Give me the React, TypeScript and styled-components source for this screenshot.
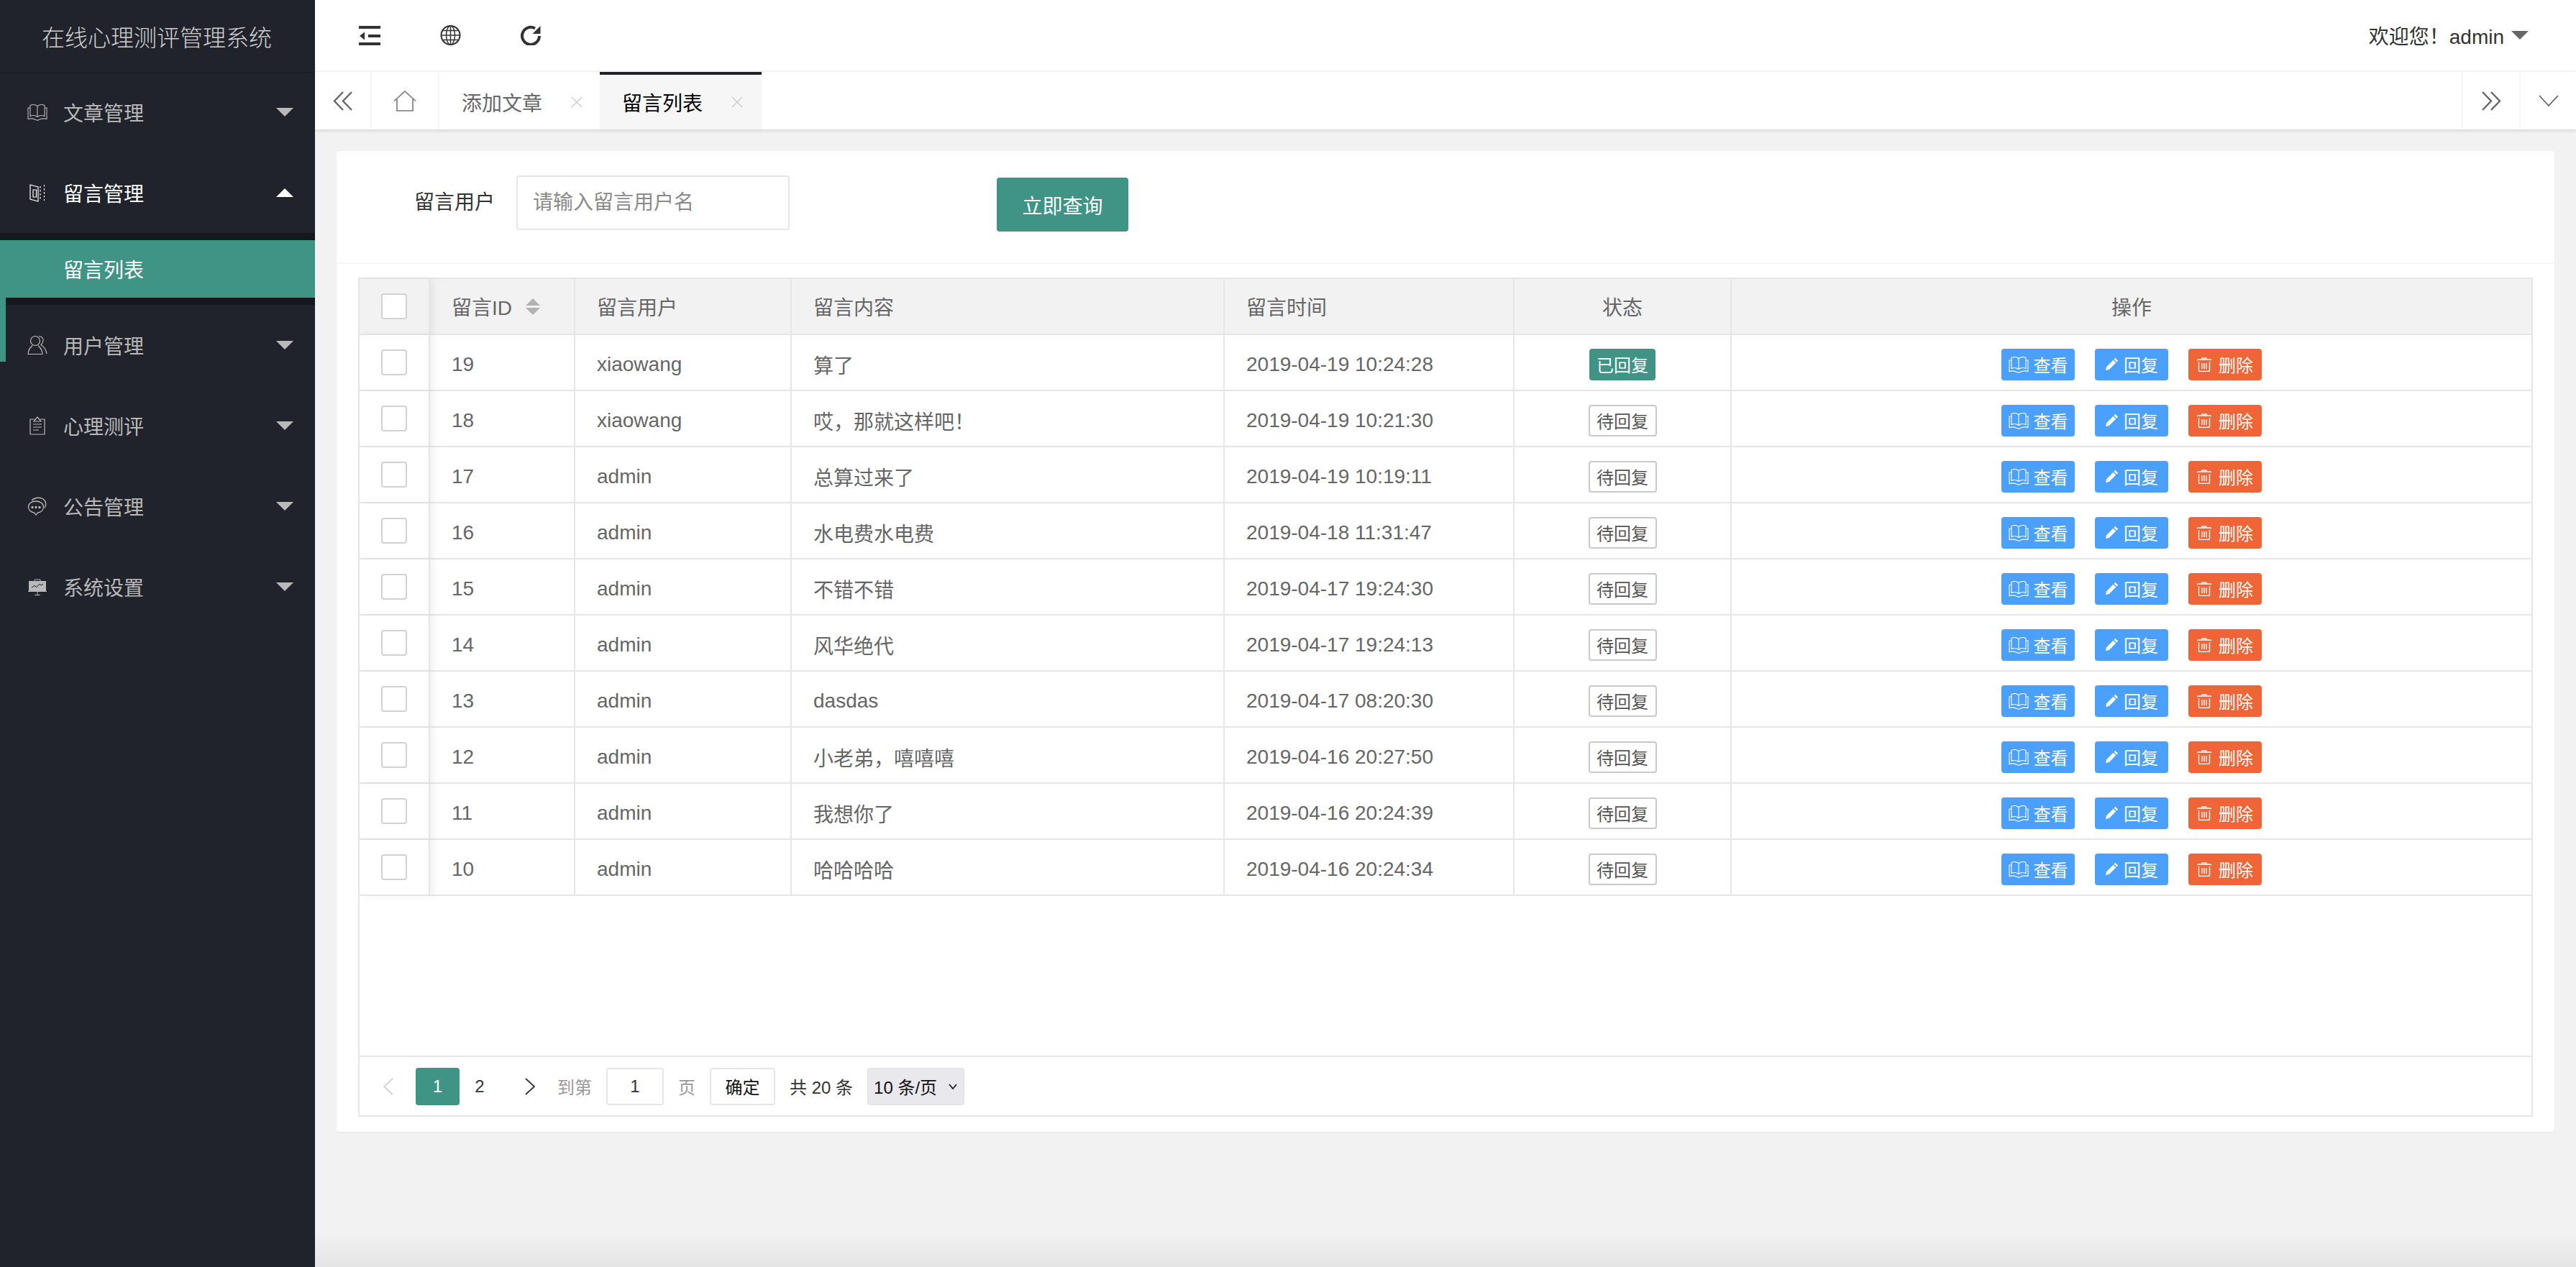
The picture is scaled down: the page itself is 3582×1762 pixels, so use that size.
import styled, { createGlobalStyle } from "styled-components";

const teal = "#409485";

const GlobalStyle = createGlobalStyle`
  html, body {
    margin: 0;
    padding: 0;
    background: #f2f2f2;
    font-family: "Liberation Sans", "Noto Sans CJK SC", sans-serif;
    font-size: 28px;
    color: #666;
  }
  * {
    box-sizing: border-box;
  }
`;

const Page = styled.div`
  display: flex;
  min-height: 100vh;
`;

const Sidebar = styled.aside`
  flex: none;
  width: 438px;
  background: #20232b;
`;

const Logo = styled.div`
  height: 100px;
  display: flex;
  align-items: center;
  padding-left: 58px;
  font-size: 32px;
  font-weight: 300;
  color: #d0d0d0;
  box-shadow: 0 1px 2px rgba(0, 0, 0, 0.2);
`;

const NavItem = styled.div<{ $active?: boolean }>`
  height: 112px;
  display: flex;
  align-items: center;
  padding: 0 30px 0 38px;
  color: ${({ $active }) => ($active ? "#fff" : "#b9b9b9")};
`;

const NavIcon = styled.span`
  flex: none;
  width: 28px;
  height: 28px;
  margin-right: 22px;
  display: flex;
  align-items: center;
  justify-content: center;
`;

const NavLabel = styled.span`
  flex: 1;
`;

const Caret = styled.span<{ $up?: boolean }>`
  width: 0;
  height: 0;
  border-left: 12px solid transparent;
  border-right: 12px solid transparent;
  border-top: ${({ $up }) => ($up ? "0" : "12px solid currentColor")};
  border-bottom: ${({ $up }) => ($up ? "12px solid currentColor" : "0")};
`;

const SubMenu = styled.div`
  position: relative;
  padding: 10px 0;
  background: #16181e;
`;

const SubItem = styled.div`
  height: 80px;
  display: flex;
  align-items: center;
  padding-left: 88px;
  background: ${teal};
  color: #fff;
`;

const NavMarker = styled.span`
  position: absolute;
  left: 0;
  top: 90px;
  width: 8px;
  height: 89px;
  background: ${teal};
`;

const Main = styled.main`
  flex: 1;
  min-width: 0;
  background: linear-gradient(to bottom, #f2f2f2 calc(100% - 50px), #e5e5e5 100%);
`;

const Header = styled.header`
  height: 100px;
  display: flex;
  align-items: center;
  padding: 0 66px 0 61px;
  background: #fff;
  border-bottom: 2px solid #f6f6f6;
  color: #333;
`;

const HeaderTools = styled.div`
  display: flex;
  align-items: center;
  gap: 83px;
`;

const Welcome = styled.div`
  margin-left: auto;
  display: flex;
  align-items: center;
  gap: 10px;
  color: #333;
`;

const WelcomeCaret = styled(Caret)`
  color: #666;
`;

const TabBar = styled.nav`
  position: relative;
  height: 80px;
  display: flex;
  background: #fff;
  box-shadow: 0 2px 5px rgba(0, 0, 0, 0.12);
  color: #666;
`;

const TabButton = styled.div<{ $width: number; $side?: "left" | "right" }>`
  flex: none;
  width: ${({ $width }) => $width}px;
  display: flex;
  align-items: center;
  justify-content: center;
  ${({ $side }) =>
    $side === "left"
      ? "border-left: 2px solid #f6f6f6;"
      : "border-right: 2px solid #f6f6f6;"}
`;

const TabSpacer = styled.div`
  flex: 1;
`;

const Tab = styled.div<{ $active?: boolean }>`
  flex: none;
  width: ${({ $active }) => ($active ? 225 : 223)}px;
  display: flex;
  align-items: center;
  padding-left: 31px;
  color: ${({ $active }) => ($active ? "#000" : "#666")};
  background: ${({ $active }) => ($active ? "#f6f6f6" : "#fff")};
  border-top: 4px solid ${({ $active }) => ($active ? "#20232b" : "transparent")};
`;

const TabClose = styled.span`
  margin-left: 40px;
  display: flex;
  color: #c9c9c9;
`;

const Content = styled.section`
  padding: 30px;
`;

const Panel = styled.div`
  height: 1364px;
  background: #fff;
  border-radius: 4px;
  box-shadow: 0 1px 2px rgba(0, 0, 0, 0.05);
  display: flex;
  flex-direction: column;
`;

const SearchBar = styled.form`
  height: 157px;
  flex: none;
  display: flex;
  align-items: flex-start;
  padding: 34px 0 0 108px;
  border-bottom: 2px solid #f6f6f6;
`;

const SearchLabel = styled.label`
  width: 142px;
  line-height: 76px;
  color: #333;
`;

const SearchInput = styled.input`
  width: 380px;
  height: 76px;
  padding: 0 21px;
  border: 2px solid #e6e6e6;
  border-radius: 4px;
  font: inherit;
  color: #333;
  outline: none;

  &::placeholder {
    color: #8a8a8a;
  }
`;

const SearchButton = styled.button`
  width: 183px;
  height: 75px;
  margin: 3px 0 0 288px;
  border: 0;
  border-radius: 4px;
  background: ${teal};
  color: #fff;
  font: inherit;
`;

const TableBox = styled.div`
  flex: none;
  height: 1167px;
  margin: 19px 30px 21px 30px;
  border: 2px solid #e6e6e6;
  display: flex;
  flex-direction: column;
`;

const Table = styled.table`
  width: 100%;
  table-layout: fixed;
  border-collapse: separate;
  border-spacing: 0;
`;

const Th = styled.th<{ $width?: number; $center?: boolean }>`
  ${({ $width }) => ($width ? `width: ${$width}px;` : "")}
  height: 78px;
  padding: 0 ${({ $center }) => ($center ? 0 : 30)}px;
  background: #f2f2f2;
  border-right: 2px solid #e6e6e6;
  border-bottom: 2px solid #e6e6e6;
  font-weight: 400;
  text-align: ${({ $center }) => ($center ? "center" : "left")};
  color: #666;

  &:last-child {
    border-right: 0;
  }
`;

const Td = styled.td<{ $center?: boolean }>`
  height: 78px;
  padding: 5px ${({ $center }) => ($center ? 0 : 30)}px 0;
  border-right: 2px solid #e6e6e6;
  border-bottom: 2px solid #e6e6e6;
  text-align: ${({ $center }) => ($center ? "center" : "left")};
  color: #666;

  &:last-child {
    border-right: 0;
  }
`;

const FixedTh = styled(Th)`
  position: relative;
  box-shadow: 5px 0 10px rgba(0, 0, 0, 0.06);
`;

const FixedTd = styled(Td)`
  position: relative;
  padding-top: 0;
  background: #fff;
  box-shadow: 5px 0 10px rgba(0, 0, 0, 0.06);
`;

const Check = styled.span`
  display: block;
  width: 36px;
  height: 36px;
  margin: 0 auto;
  background: #fff;
  border: 2px solid #d2d2d2;
  border-radius: 4px;
`;

const SortHead = styled.span`
  display: flex;
  align-items: center;
  gap: 19px;
`;

const SortIcon = styled.span`
  display: flex;
  flex-direction: column;
  gap: 3px;
`;

const SortArrow = styled.span<{ $up?: boolean }>`
  width: 0;
  height: 0;
  border-left: 10px solid transparent;
  border-right: 10px solid transparent;
  border-top: ${({ $up }) => ($up ? "0" : "10px solid #b2b2b2")};
  border-bottom: ${({ $up }) => ($up ? "10px solid #b2b2b2" : "0")};
`;

const StatusTag = styled.span<{ $done?: boolean }>`
  display: inline-flex;
  align-items: center;
  justify-content: center;
  vertical-align: middle;
  width: ${({ $done }) => ($done ? 92 : 95)}px;
  height: 44px;
  font-size: 24px;
  border-radius: 4px;
  color: ${({ $done }) => ($done ? "#fff" : "#555")};
  background: ${({ $done }) => ($done ? teal : "#fff")};
  border: ${({ $done }) => ($done ? "0" : "2px solid #c9c9c9")};
`;

const Actions = styled.div`
  display: flex;
  justify-content: center;
  gap: 28px;
`;

const ActionButton = styled.span<{ $danger?: boolean }>`
  width: 102px;
  height: 44px;
  display: flex;
  align-items: center;
  justify-content: center;
  gap: ${({ $danger }) => ($danger ? 10 : 7)}px;
  border-radius: 4px;
  font-size: 24px;
  color: #fff;
  background: ${({ $danger }) => ($danger ? "#f06537" : "#4ba0fb")};
`;

const TableFill = styled.div`
  flex: 1;
`;

const Pager = styled.div`
  flex: none;
  height: 83px;
  display: flex;
  align-items: center;
  gap: 20px;
  padding-left: 32px;
  border-top: 2px solid #e6e6e6;
  font-size: 24px;
  color: #333;
`;

const PagerChevron = styled.span<{ $off?: boolean; $gap: number }>`
  display: flex;
  margin-left: ${({ $gap }) => $gap}px;
  color: ${({ $off }) => ($off ? "#d2d2d2" : "#333")};
`;

const PageNumber = styled.span<{ $current?: boolean }>`
  height: 52px;
  display: flex;
  align-items: center;
  justify-content: center;
  border-radius: 4px;
  width: ${({ $current }) => ($current ? 61 : 56)}px;
  margin-left: ${({ $current }) => ($current ? 11 : -20)}px;
  background: ${({ $current }) => ($current ? teal : "transparent")};
  color: ${({ $current }) => ($current ? "#fff" : "#333")};
`;

const PagerHint = styled.span<{ $gap?: number }>`
  color: #999;
  margin-left: ${({ $gap }) => $gap ?? 0}px;
`;

const PagerInput = styled.input`
  width: 80px;
  height: 52px;
  text-align: center;
  border: 2px solid #e6e6e6;
  border-radius: 4px;
  font: inherit;
  color: #333;
  outline: none;
`;

const PagerConfirm = styled.button`
  width: 91px;
  height: 52px;
  padding: 0;
  background: #fff;
  border: 2px solid #e6e6e6;
  border-radius: 4px;
  font: inherit;
  color: #111;
`;

const PageSize = styled.div`
  width: 135px;
  height: 52px;
  display: flex;
  align-items: center;
  gap: 16px;
  padding-left: 8px;
  background: #e9e9ed;
  border: 1px solid #dedee2;
  border-radius: 4px;
  color: #111;
  white-space: nowrap;
`;

const BookIcon = ({ size = 28 }: { size?: number }) => (
  <svg width={size} height={(size * 24) / 28} viewBox="0 0 28 24" fill="none" stroke="currentColor" strokeWidth="1.1">
    <path d="M4 2.500c3.500-1.600 7-1.200 10 1 3-2.200 6.500-2.600 10-1v15c-3.500-1.600-7-1.200-10 1-3-2.200-6.500-2.600-10-1z" />
    <path d="M14 3.500v15" />
    <path d="M4 6H1v15.500c4-1 8-.6 11 1l2 1 2-1c3-1.600 7-2 11-1V6h-3" />
  </svg>
);

const DoorIcon = () => (
  <svg width="24" height="26" viewBox="0 0 24 26" fill="none" stroke="currentColor" strokeWidth="1.200">
    <path d="M2 2l11 3v20L2 22z" />
    <path d="M6 9h4.500v10H6z" />
    <path d="M16 4v19M21.500 2v22" strokeDasharray="2.500 2.500" />
  </svg>
);

const PersonIcon = () => (
  <svg width="28" height="28" viewBox="0 0 28 28" fill="none" stroke="currentColor" strokeWidth="1.200">
    <circle cx="11" cy="8" r="6.500" />
    <path d="M7 14.500c-3 3-6 6-6 12h20c0-6-3-9-6-12" />
    <path d="M16 1.500c4 0 6.500 3 6 6.500-.3 2.500-2 4.500-3 5.500 4 2.500 7 6.500 8 12.500" />
  </svg>
);

const ClipboardIcon = () => (
  <svg width="24" height="26" viewBox="0 0 24 26" fill="none" stroke="currentColor" strokeWidth="1.200">
    <path d="M8 4H2v21h20V4h-6" />
    <path d="M7 7l5-6 5 6z" />
    <path d="M6 11h12M6 15h12M6 19h8" />
  </svg>
);

const ChatIcon = () => (
  <svg width="28" height="26" viewBox="0 0 28 26" fill="none" stroke="currentColor" strokeWidth="1.300">
    <path d="M12 6C6 6 1.500 9.500 1.500 14s4 7.500 8 8l2.500 3 2.500-3c4.500-.5 8-3.500 8-8s-4.500-8-10.500-8z" />
    <path d="M6 5c3-3.500 10-5 15-2.500 5 2.500 6 8 3 13" />
    <circle cx="7" cy="14.500" r="1" fill="currentColor" />
    <circle cx="12" cy="14.500" r="1" fill="currentColor" />
    <circle cx="17" cy="14.500" r="1" fill="currentColor" />
  </svg>
);

const BoardIcon = () => (
  <svg width="26" height="23" viewBox="0 0 26 23">
    <path d="M9 3V1h8v2" fill="none" stroke="currentColor" strokeWidth="1" />
    <path d="M1 3h24v14H1z" fill="currentColor" />
    <path d="M0 17.500h26M13 18v5M9 22.500h8" stroke="currentColor" strokeWidth="1" />
    <path d="M5 12l4-2.500 3 2 4-4.500 2 2 3-2" fill="none" stroke="#20232b" strokeWidth="1" />
  </svg>
);

const ShrinkIcon = () => (
  <svg width="30" height="27" viewBox="0 0 30 27" fill="currentColor">
    <path d="M0 0h30v4H0zM13 12h17v4H13zM0 23h30v4H0z" />
    <path d="M1 14l7-5.500v11z" />
  </svg>
);

const GlobeIcon = () => (
  <svg width="29" height="28" viewBox="0 0 29 28" fill="none" stroke="currentColor" strokeWidth="1.500">
    <circle cx="14.500" cy="14" r="13" strokeWidth="2" />
    <ellipse cx="14.500" cy="14" rx="6" ry="13" />
    <path d="M14.500 1v26M2 14h25M4 7.500h21M4 20.500h21" />
  </svg>
);

const RefreshIcon = () => (
  <svg width="28" height="28" viewBox="0 0 28 28" fill="none">
    <path d="M20 4.500A12 12 0 1 0 26 15" stroke="currentColor" strokeWidth="4" />
    <path d="M27.500 1v11h-11z" fill="currentColor" />
  </svg>
);

const DoubleChevronIcon = ({ right }: { right?: boolean }) => (
  <svg width="28" height="27" viewBox="0 0 28 27" fill="none" stroke="#666" strokeWidth="2.400" style={right ? { transform: "scaleX(-1)" } : undefined}>
    <path d="M14 1L2 13.500 14 26M26 1L14 13.500 26 26" />
  </svg>
);

const HomeIcon = () => (
  <svg width="32" height="29" viewBox="0 0 32 29" fill="none" stroke="#777" strokeWidth="1.600">
    <path d="M1 14.500L16 1l15 13.500" />
    <path d="M5 12v16h22V12" />
  </svg>
);

const DownIcon = () => (
  <svg width="28" height="16" viewBox="0 0 28 16" fill="none" stroke="#666" strokeWidth="1.800">
    <path d="M1 1l13 14L27 1" />
  </svg>
);

const CloseIcon = () => (
  <svg width="16" height="16" viewBox="0 0 16 16" fill="none" stroke="currentColor" strokeWidth="1.300">
    <path d="M1 1l14 14M15 1L1 15" />
  </svg>
);

const PenIcon = () => (
  <svg width="19" height="19" viewBox="0 0 18 18" fill="currentColor">
    <path d="M13.500.800l3.700 3.700-1.700 1.700-3.700-3.700z" />
    <path d="M10.800 3.500l3.700 3.700L5.500 16 1 17l1-4.500z" />
  </svg>
);

const TrashIcon = () => (
  <svg width="20" height="20" viewBox="0 0 20 20" fill="none" stroke="currentColor" strokeWidth="1.400">
    <path d="M0 4.500c0-1 .6-1.500 1.500-1.500h17c.9 0 1.500.5 1.500 1.500M7 3V1h6v2" />
    <path d="M2.500 6v12c0 1 .5 1.500 1.500 1.500h12c1 0 1.500-.5 1.500-1.500V6" />
    <path d="M7 8v8M10 8v8M13 8v8" />
  </svg>
);

const PagerArrow = ({ flip }: { flip?: boolean }) => (
  <svg width="15" height="24" viewBox="0 0 15 24" fill="none" stroke="currentColor" strokeWidth="1.800" style={flip ? { transform: "scaleX(-1)" } : undefined}>
    <path d="M14 1L2 12l12 11" />
  </svg>
);

const SmallChevron = () => (
  <svg width="12" height="8" viewBox="0 0 12 8" fill="none" stroke="#222" strokeWidth="1.800">
    <path d="M1 1l5 6 5-6" />
  </svg>
);

const messages = [
  { id: 19, user: "xiaowang", text: "算了", time: "2019-04-19 10:24:28", done: true },
  { id: 18, user: "xiaowang", text: "哎，那就这样吧！", time: "2019-04-19 10:21:30" },
  { id: 17, user: "admin", text: "总算过来了", time: "2019-04-19 10:19:11" },
  { id: 16, user: "admin", text: "水电费水电费", time: "2019-04-18 11:31:47" },
  { id: 15, user: "admin", text: "不错不错", time: "2019-04-17 19:24:30" },
  { id: 14, user: "admin", text: "风华绝代", time: "2019-04-17 19:24:13" },
  { id: 13, user: "admin", text: "dasdas", time: "2019-04-17 08:20:30" },
  { id: 12, user: "admin", text: "小老弟，嘻嘻嘻", time: "2019-04-16 20:27:50" },
  { id: 11, user: "admin", text: "我想你了", time: "2019-04-16 20:24:39" },
  { id: 10, user: "admin", text: "哈哈哈哈", time: "2019-04-16 20:24:34" },
];

export default function App() {
  return (
    <Page>
      <GlobalStyle />
      <Sidebar>
        <Logo>在线心理测评管理系统</Logo>
        <NavItem>
          <NavIcon><BookIcon /></NavIcon>
          <NavLabel>文章管理</NavLabel>
          <Caret />
        </NavItem>
        <NavItem $active>
          <NavIcon><DoorIcon /></NavIcon>
          <NavLabel>留言管理</NavLabel>
          <Caret $up />
        </NavItem>
        <SubMenu>
          <SubItem>留言列表</SubItem>
          <NavMarker />
        </SubMenu>
        <NavItem>
          <NavIcon><PersonIcon /></NavIcon>
          <NavLabel>用户管理</NavLabel>
          <Caret />
        </NavItem>
        <NavItem>
          <NavIcon><ClipboardIcon /></NavIcon>
          <NavLabel>心理测评</NavLabel>
          <Caret />
        </NavItem>
        <NavItem>
          <NavIcon><ChatIcon /></NavIcon>
          <NavLabel>公告管理</NavLabel>
          <Caret />
        </NavItem>
        <NavItem>
          <NavIcon><BoardIcon /></NavIcon>
          <NavLabel>系统设置</NavLabel>
          <Caret />
        </NavItem>
      </Sidebar>

      <Main>
        <Header>
          <HeaderTools>
            <ShrinkIcon />
            <GlobeIcon />
            <RefreshIcon />
          </HeaderTools>
          <Welcome>
            欢迎您！admin
            <WelcomeCaret />
          </Welcome>
        </Header>

        <TabBar>
          <TabButton $width={79}><DoubleChevronIcon /></TabButton>
          <TabButton $width={94}><HomeIcon /></TabButton>
          <Tab>
            添加文章
            <TabClose><CloseIcon /></TabClose>
          </Tab>
          <Tab $active>
            留言列表
            <TabClose><CloseIcon /></TabClose>
          </Tab>
          <TabSpacer />
          <TabButton $width={80} $side="left"><DoubleChevronIcon right /></TabButton>
          <TabButton $width={79} $side="left"><DownIcon /></TabButton>
        </TabBar>

        <Content>
          <Panel>
            <SearchBar>
              <SearchLabel>留言用户</SearchLabel>
              <SearchInput placeholder="请输入留言用户名" />
              <SearchButton type="button">立即查询</SearchButton>
            </SearchBar>

            <TableBox>
              <Table>
                <thead>
                  <tr>
                    <FixedTh $width={98} $center><Check /></FixedTh>
                    <Th $width={202}>
                      <SortHead>
                        留言ID
                        <SortIcon>
                          <SortArrow $up />
                          <SortArrow />
                        </SortIcon>
                      </SortHead>
                    </Th>
                    <Th $width={301}>留言用户</Th>
                    <Th $width={602}>留言内容</Th>
                    <Th $width={403}>留言时间</Th>
                    <Th $width={302} $center>状态</Th>
                    <Th $center>操作</Th>
                  </tr>
                </thead>
                <tbody>
                  {messages.map((m) => (
                    <tr key={m.id}>
                      <FixedTd $center><Check /></FixedTd>
                      <Td>{m.id}</Td>
                      <Td>{m.user}</Td>
                      <Td>{m.text}</Td>
                      <Td>{m.time}</Td>
                      <Td $center>
                        <StatusTag $done={m.done}>{m.done ? "已回复" : "待回复"}</StatusTag>
                      </Td>
                      <Td $center>
                        <Actions>
                          <ActionButton><BookIcon />查看</ActionButton>
                          <ActionButton><PenIcon />回复</ActionButton>
                          <ActionButton $danger><TrashIcon />删除</ActionButton>
                        </Actions>
                      </Td>
                    </tr>
                  ))}
                </tbody>
              </Table>
              <TableFill />
              <Pager>
                <PagerChevron $off $gap={0}><PagerArrow /></PagerChevron>
                <PageNumber $current>1</PageNumber>
                <PageNumber>2</PageNumber>
                <PagerChevron $gap={15}><PagerArrow flip /></PagerChevron>
                <PagerHint $gap={10}>到第</PagerHint>
                <PagerInput defaultValue="1" />
                <PagerHint>页</PagerHint>
                <PagerConfirm type="button">确定</PagerConfirm>
                <span>共 20 条</span>
                <PageSize>
                  10 条/页
                  <SmallChevron />
                </PageSize>
              </Pager>
            </TableBox>
          </Panel>
        </Content>
      </Main>
    </Page>
  );
}
